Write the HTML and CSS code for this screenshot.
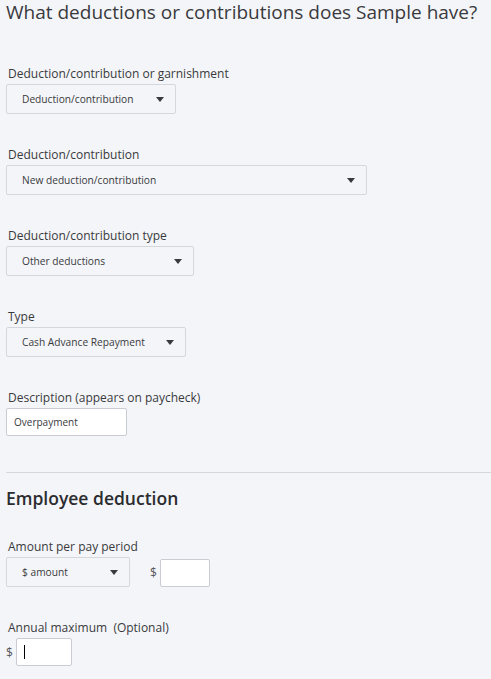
FILE: index.html
```html
<!DOCTYPE html>
<html>
<head>
<meta charset="utf-8">
<link rel="stylesheet" href="styles.css">
</head>
<body>
<div class="page">
  <h1 class="title">What deductions or contributions does Sample have?</h1>

  <div class="field first">
    <label class="label">Deduction/contribution or garnishment</label>
    <div class="select w1"><span>Deduction/contribution</span><i class="caret"></i></div>
  </div>

  <div class="field">
    <label class="label">Deduction/contribution</label>
    <div class="select w2"><span>New deduction/contribution</span><i class="caret"></i></div>
  </div>

  <div class="field">
    <label class="label">Deduction/contribution type</label>
    <div class="select w3"><span>Other deductions</span><i class="caret"></i></div>
  </div>

  <div class="field">
    <label class="label">Type</label>
    <div class="select w4"><span>Cash Advance Repayment</span><i class="caret"></i></div>
  </div>

  <div class="field">
    <label class="label">Description (appears on paycheck)</label>
    <div class="input w5">Overpayment</div>
  </div>

  <hr class="divider">

  <h2 class="section">Employee deduction</h2>

  <div class="field first2">
    <label class="label">Amount per pay period</label>
    <div class="row">
      <div class="select w6"><span>$ amount</span><i class="caret"></i></div>
      <span class="dollar d1">$</span>
      <div class="input w7"></div>
    </div>
  </div>

  <div class="field">
    <label class="label">Annual maximum&nbsp; (Optional)</label>
    <div class="row">
      <span class="dollar">$</span>
      <div class="input w8"><span class="cursor"></span></div>
    </div>
  </div>
</div>
</body>
</html>
```
FILE: styles.css
```css
html, body {
  margin: 0;
  padding: 0;
  background: #f4f5f8;
}
body {
  font-family: "Open Sans", "Noto Sans", sans-serif;
  color: #393a3d;
}
.page {
  padding: 0 0 0 6px;
}
.title {
  margin: 0;
  font-size: 19px;
  line-height: 24px;
  font-weight: 400;
  color: #393a3d;
  white-space: nowrap;
}
.field {
  margin-top: 33px;
}
.field.first {
  margin-top: 42px;
}
.field.first2 {
  margin-top: 31px;
}
.label {
  display: block;
  font-size: 12px;
  line-height: 15px;
  margin: 0 0 3px 2px;
  color: #393a3d;
}
.select {
  box-sizing: border-box;
  height: 30px;
  border: 1px solid #d4d7dc;
  border-radius: 2px;
  background: #f4f5f8;
  display: flex;
  align-items: center;
  justify-content: space-between;
  padding: 0 11px 0 15px;
  font-size: 10.2px;
  color: #393a3d;
}
.caret {
  width: 0;
  height: 0;
  border-left: 4px solid transparent;
  border-right: 4px solid transparent;
  border-top: 5px solid #393a3d;
}
.w1 { width: 170px; }
.w2 { width: 361px; }
.w3 { width: 188px; }
.w4 { width: 180px; }
.w6 { width: 124px; }
.input {
  box-sizing: border-box;
  height: 28px;
  border: 1px solid #c9ccd2;
  border-radius: 2px;
  background: #fff;
  font-size: 10px;
  display: flex;
  align-items: center;
  padding: 0 7px;
}
.w5 { width: 121px; }
.w7 { width: 50px; }
.w8 { width: 56px; }
.row {
  display: flex;
  align-items: center;
}
.dollar {
  font-size: 12px;
  color: #55565b;
  margin-right: 3px;
}
.d1 {
  margin-left: 20px;
}
.w7 { margin-top: 2px; }
.cursor {
  display: block;
  width: 1px;
  height: 14px;
  background: #000;
}
.divider {
  border: 0;
  border-top: 1px solid #d4d7dc;
  margin: 36px 0 0 0;
}
.section {
  margin: 15px 0 0 0;
  font-size: 17.5px;
  line-height: 20px;
  font-weight: 600;
  color: #2b2c2f;
}
```
